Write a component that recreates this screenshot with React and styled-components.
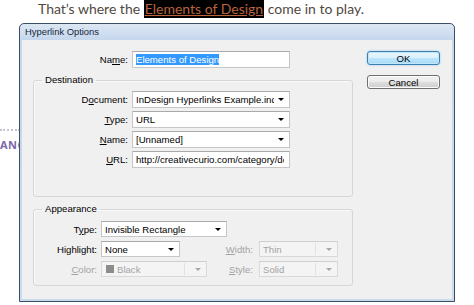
import React from 'react';
import styled, { createGlobalStyle } from 'styled-components';

const GlobalStyle = createGlobalStyle`
  html, body {
    margin: 0;
    padding: 0;
    background: #fff;
  }
`;

const Page = styled.div`
  position: relative;
  width: 474px;
  height: 305px;
  overflow: hidden;
  font-family: 'Liberation Sans', Arial, sans-serif;
`;

const Intro = styled.p`
  margin: 0;
  height: 23px;
  padding-left: 38px;
  font-family: Lato, 'Open Sans', sans-serif;
  font-size: 14px;
  line-height: 18px;
  color: #51483f;
  white-space: nowrap;
`;

const Marked = styled.span`
  display: inline-block;
  height: 18px;
  padding: 0 1px;
  background: #000;
  color: #b9643f;
  text-decoration: underline;
`;

// bit of the article heading that peeks out from behind the dialog
const Behind = styled.div`
  position: absolute;
  left: 0;
  top: 129px;
  width: 24px;
`;

const Dots = styled.div`
  width: 20px;
  border-top: 2px dotted #c9c3d8;
`;

const Heading = styled.div`
  margin-top: 6px;
  font-family: 'Open Sans', sans-serif;
  font-weight: 700;
  font-size: 11px;
  letter-spacing: 0.5px;
  color: #7a68a8;
`;

const Dialog = styled.div`
  position: relative;
  z-index: 1;
  margin-left: 19px;
  width: 436px;
  height: 279px;
  box-sizing: border-box;
  border: 1px solid #3c4e66;
  border-radius: 5px 5px 0 0;
  background: linear-gradient(#dde7f3, #c5d7ed 16px, #cbdbee);
  display: flex;
  flex-direction: column;
`;

const TitleBar = styled.div`
  height: 16px;
  line-height: 16px;
  padding-left: 5px;
  font-size: 9.4px;
  color: #14253b;
`;

const Body = styled.div`
  flex: 1;
  margin: 0 2px 2px;
  background: #f0f0f0;
  display: flex;
  padding: 11px 0 0 11px;
`;

const Form = styled.div`
  width: 320px;
  display: flex;
  flex-direction: column;
`;

const Row = styled.div`
  display: flex;
  align-items: center;
  height: ${({ h }) => h || 17}px;
`;

const Label = styled.span`
  width: ${({ w }) => w}px;
  margin-right: ${({ gap }) => gap || 4}px;
  text-align: right;
  font-size: 9.6px;
  color: ${({ disabled }) => (disabled ? '#a3a3a3' : '#000')};
  white-space: nowrap;
`;

const Key = styled.span`
  text-decoration: underline;
`;

const Field = styled.div`
  box-sizing: border-box;
  width: ${({ w }) => w}px;
  height: 100%;
  display: flex;
  align-items: center;
  padding: 0 5px 0 3px;
  background: ${({ disabled }) => (disabled ? '#f4f4f4' : '#fff')};
  border: 1px solid ${({ disabled }) => (disabled ? '#d9d9d9' : '#c6c6c6')};
  border-top-color: ${({ disabled }) => (disabled ? '#cfcfcf' : '#a9a9a9')};
  font-size: 9.6px;
  color: ${({ disabled }) => (disabled ? '#a3a3a3' : '#000')};
  overflow: hidden;
  white-space: nowrap;
`;

const Value = styled.span`
  flex: 1;
  overflow: hidden;
  text-overflow: clip;
`;

const Selected = styled.span`
  background: #3399ff;
  color: #fff;
`;

const Divider = styled.span`
  align-self: stretch;
  width: 1px;
  margin: 1px 6px 1px 4px;
  background: #e2e2e2;
`;

const Caret = styled.span`
  flex: none;
  width: 0;
  height: 0;
  margin-left: 4px;
  border-left: 3px solid transparent;
  border-right: 3px solid transparent;
  border-top: 3px solid ${({ disabled }) => (disabled ? '#a8a8a8' : '#000')};
`;

const Swatch = styled.span`
  width: 8px;
  height: 8px;
  margin: 0 3px 0 1px;
  background: #8c8c8c;
`;

const Group = styled.fieldset`
  margin: 6px 0 0;
  padding: 0 0 ${({ pb }) => pb}px;
  min-width: 0;
  border: 1px solid #d6d6d6;
  border-radius: 3px;
  box-shadow: inset 1px 1px 0 #fafafa;
`;

const Legend = styled.legend`
  margin-left: 8px;
  padding: 0 3px;
  font-size: 9.6px;
  line-height: 12px;
  color: #000;
`;

const Rows = styled.div`
  display: flex;
  flex-direction: column;
  gap: ${({ gap }) => gap}px;
  margin-top: ${({ mt }) => mt}px;
`;

const Buttons = styled.div`
  margin-left: 14px;
  display: flex;
  flex-direction: column;
  gap: 10px;
`;

const Button = styled.div`
  box-sizing: border-box;
  width: 73px;
  height: 14px;
  display: flex;
  align-items: center;
  justify-content: center;
  border-radius: 3px;
  font-size: 9.6px;
  color: #000;
  border: 1px solid ${({ primary }) => (primary ? '#3c7fb1' : '#707070')};
  background: ${({ primary }) =>
    primary
      ? 'linear-gradient(#eaf6fd 0%, #d9f0fc 50%, #bee6fd 51%, #a7d9f5 100%)'
      : 'linear-gradient(#f2f2f2 0%, #ebebeb 50%, #dddddd 51%, #cfcfcf 100%)'};
  box-shadow: ${({ primary }) =>
    primary ? '0 0 2px #7fc7ef, inset 0 0 0 1px #bfe6fb' : 'inset 0 0 0 1px #fbfbfb'};
`;

const Select = ({ w, disabled, swatch, children }) => (
  <Field w={w} disabled={disabled}>
    {swatch && <Swatch />}
    <Value>{children}</Value>
    {disabled && <Divider />}
    <Caret disabled={disabled} />
  </Field>
);

const App = () => (
  <Page>
    <GlobalStyle />
    <Intro>
      That’s where the <Marked>Elements of Design</Marked> come in to play.
    </Intro>

    <Behind>
      <Dots />
      <Heading>ANG</Heading>
    </Behind>

    <Dialog>
      <TitleBar>Hyperlink Options</TitleBar>
      <Body>
        <Form>
          <Row>
            <Label w={95}>
              Na<Key>m</Key>e:
            </Label>
            <Field w={158}>
              <Value>
                <Selected>Elements of Design</Selected>
              </Value>
            </Field>
          </Row>

          <Group pb={28}>
            <Legend>Destination</Legend>
            <Rows gap={3} mt={5}>
              <Row>
                <Label w={94}>
                  D<Key>o</Key>cument:
                </Label>
                <Select w={158}>InDesign Hyperlinks Example.indd</Select>
              </Row>
              <Row>
                <Label w={94}>
                  <Key>T</Key>ype:
                </Label>
                <Select w={158}>URL</Select>
              </Row>
              <Row>
                <Label w={94}>
                  <Key>N</Key>ame:
                </Label>
                <Select w={158}>[Unnamed]</Select>
              </Row>
              <Row>
                <Label w={94}>
                  <Key>U</Key>RL:
                </Label>
                <Field w={158}>
                  <Value>http://creativecurio.com/category/design</Value>
                </Field>
              </Row>
            </Rows>
          </Group>

          <Group pb={8}>
            <Legend>Appearance</Legend>
            <Rows gap={4} mt={6}>
              <Row h={16}>
                <Label w={63}>
                  T<Key>y</Key>pe:
                </Label>
                <Select w={126}>Invisible Rectangle</Select>
              </Row>
              <Row h={16}>
                <Label w={63}>
                  Hi<Key>g</Key>hlight:
                </Label>
                <Select w={79}>None</Select>
                <Label w={73} gap={6} disabled>
                  <Key>W</Key>idth:
                </Label>
                <Select w={79} disabled>
                  Thin
                </Select>
              </Row>
              <Row h={16}>
                <Label w={63} disabled>
                  <Key>C</Key>olor:
                </Label>
                <Select w={106} disabled swatch>
                  Black
                </Select>
                <Label w={46} gap={6} disabled>
                  <Key>S</Key>tyle:
                </Label>
                <Select w={79} disabled>
                  Solid
                </Select>
              </Row>
            </Rows>
          </Group>
        </Form>

        <Buttons>
          <Button primary>OK</Button>
          <Button>Cancel</Button>
        </Buttons>
      </Body>
    </Dialog>
  </Page>
);

export default App;
